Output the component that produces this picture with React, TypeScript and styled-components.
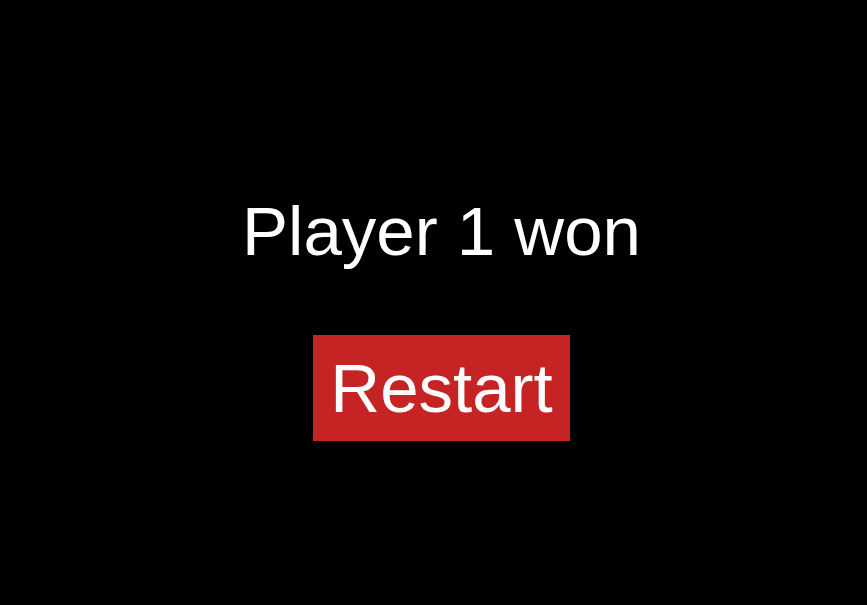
import React from 'react';
import styled, { createGlobalStyle } from 'styled-components';

const GlobalStyle = createGlobalStyle`
  html,
  body {
    margin: 0;
    background: #000;
  }
`;

const Screen = styled.div`
  box-sizing: border-box;
  min-height: 100vh;
  padding: 27px 0 0 16px;
  display: flex;
  flex-direction: column;
  align-items: center;
  justify-content: center;
  gap: 64px;
  font-family: 'Liberation Sans', Arial, sans-serif;
  color: #fff;
`;

const Message = styled.h1`
  margin: 0;
  font-size: 69px;
  font-weight: 400;
  line-height: normal;
`;

const RestartButton = styled.button`
  border: none;
  margin: 0;
  padding: 14px 17px 13px;
  background: #c62324;
  color: #fff;
  font-family: inherit;
  font-size: 69px;
  line-height: normal;
  cursor: pointer;
`;

const App = () => {
  return (
    <>
      <GlobalStyle />
      <Screen>
        <Message>Player 1 won</Message>
        <RestartButton type="button">Restart</RestartButton>
      </Screen>
    </>
  );
};

export default App;
